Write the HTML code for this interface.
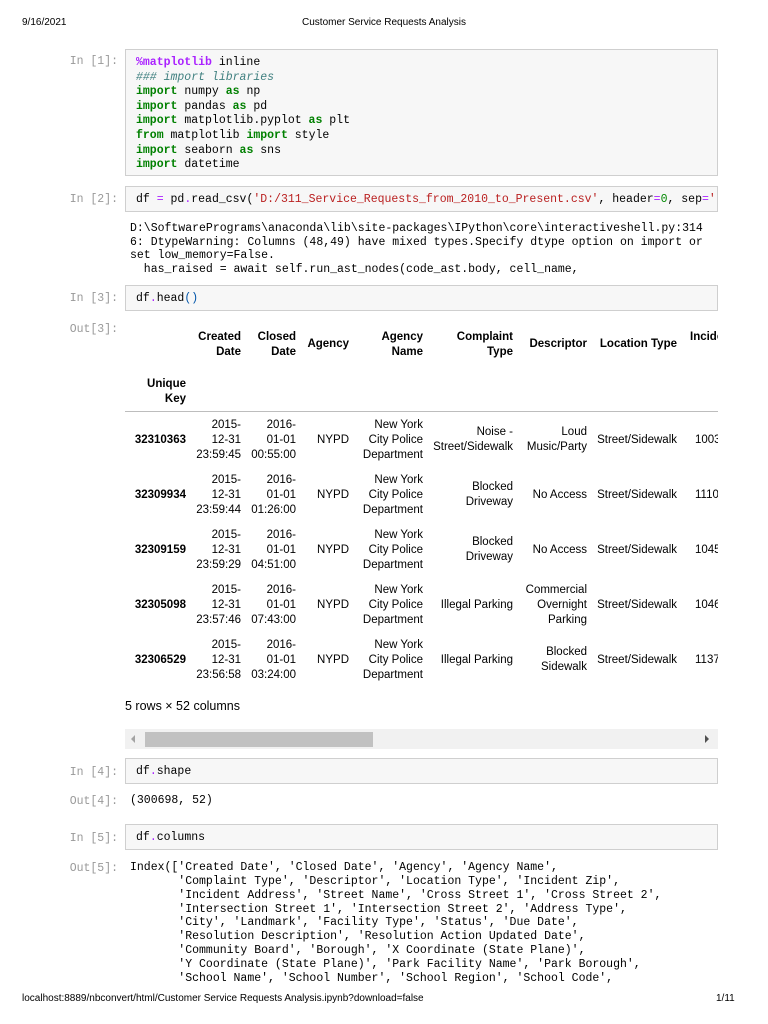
<!DOCTYPE html>
<html><head><meta charset="utf-8"><style>
*{margin:0;padding:0;box-sizing:border-box}
body{width:768px;height:1024px;background:#fff;position:relative;overflow:hidden;font-family:"Liberation Sans",sans-serif;color:#000}
.a{position:absolute}
.hdr{font-size:10px;top:17px}
.p{font-family:"Liberation Mono",monospace;font-size:11.5px;color:#999;text-align:right;width:60px;left:58px}
.box{position:absolute;left:125px;width:593px;border:1px solid #cfcfcf;background:#f7f7f7}
.m{font-family:"Liberation Mono",monospace;font-size:11.5px;white-space:pre;line-height:14.6px}
.k{color:#008000;font-weight:bold}.c{color:#408080;font-style:italic}.s{color:#ba2121}.o{color:#aa22ff}.pu{color:#aa22ff;font-weight:bold}
.t{font-size:11.5px;line-height:15px;text-align:right;position:absolute;color:#000}
.th{font-weight:bold}
</style></head><body>
<div class="a hdr" style="left:22px">9/16/2021</div>
<div class="a hdr" style="left:0;width:768px;text-align:center">Customer Service Requests Analysis</div>

<div class="a p" style="top:55px">In [1]:</div>
<div class="box" style="top:49px;height:127px;padding:6px 0 0 10px"><div class="m"><span class="pu">%matplotlib</span> inline
<span class="c">### import libraries</span>
<span class="k">import</span> numpy <span class="k">as</span> np
<span class="k">import</span> pandas <span class="k">as</span> pd
<span class="k">import</span> matplotlib.pyplot <span class="k">as</span> plt
<span class="k">from</span> matplotlib <span class="k">import</span> style
<span class="k">import</span> seaborn <span class="k">as</span> sns
<span class="k">import</span> datetime</div></div>

<div class="a p" style="top:193px">In [2]:</div>
<div class="box" style="top:186px;height:26px;padding:6px 0 0 10px;overflow:hidden"><div class="m">df <span class="o">=</span> pd<span class="o">.</span>read_csv(<span class="s">'D:/311_Service_Requests_from_2010_to_Present.csv'</span>, header<span class="o">=</span><span style="color:#080">0</span>, sep<span class="o">=</span><span class="s">'</span></div></div>

<div class="a m" style="left:130px;top:222px;line-height:13.7px">D:\SoftwarePrograms\anaconda\lib\site-packages\IPython\core\interactiveshell.py:314
6: DtypeWarning: Columns (48,49) have mixed types.Specify dtype option on import or
set low_memory=False.
  has_raised = await self.run_ast_nodes(code_ast.body, cell_name,</div>

<div class="a p" style="top:292px">In [3]:</div>
<div class="box" style="top:285px;height:26px;padding:6px 0 0 10px"><div class="m">df<span class="o">.</span>head<span style="color:#0055aa">()</span></div></div>

<div class="a p" style="top:323px">Out[3]:</div>

<div class="t th" style="left:180px;width:61px;top:330px">Created<br>Date</div>
<div class="t th" style="left:240px;width:56px;top:330px">Closed<br>Date</div>
<div class="t th" style="left:300px;width:49px;top:337px">Agency</div>
<div class="t th" style="left:350px;width:73px;top:330px">Agency<br>Name</div>
<div class="t th" style="left:430px;width:83px;top:330px">Complaint<br>Type</div>
<div class="t th" style="left:520px;width:67px;top:337px">Descriptor</div>
<div class="t th" style="left:594px;width:83px;top:337px">Location Type</div>
<div class="t th" style="left:690px;top:330px;text-align:left;width:28px;overflow:hidden;white-space:nowrap">Incident</div>
<div class="t th" style="left:125px;width:61px;top:377px">Unique<br>Key</div>
<div class="a" style="left:125px;top:411px;width:593px;height:1px;background:#bdbdbd"></div>

<div id="rows"></div>
<script>
var d=[["32310363","12-31<br>23:59:45","01-01<br>00:55:00","Noise -<br>Street/Sidewalk","Loud<br>Music/Party","1003"],
["32309934","12-31<br>23:59:44","01-01<br>01:26:00","Blocked<br>Driveway","No Access","1110"],
["32309159","12-31<br>23:59:29","01-01<br>04:51:00","Blocked<br>Driveway","No Access","1045"],
["32305098","12-31<br>23:57:46","01-01<br>07:43:00","Illegal Parking","Commercial<br>Overnight<br>Parking","1046"],
["32306529","12-31<br>23:56:58","01-01<br>03:24:00","Illegal Parking","Blocked<br>Sidewalk","1137"]];
var h="";
function lines(s){return s.split("<br>").length}
function cell(l,w,c,txt,b){var n=lines(txt);var top=c-n*7.5;return '<div class="t'+(b?' th':'')+'" style="left:'+l+'px;width:'+w+'px;top:'+top+'px">'+txt+'</div>'}
for(var i=0;i<5;i++){var c=440+i*55,r=d[i];
h+=cell(125,61,c,r[0],1)+cell(180,61,c,"2015-<br>"+r[1])+cell(240,56,c,"2016-<br>"+r[2])+cell(300,49,c,"NYPD")+cell(350,73,c,"New York<br>City Police<br>Department")+cell(420,93,c,r[3])+cell(510,77,c,r[4])+cell(594,83,c,"Street/Sidewalk")+'<div class="t" style="left:695px;width:23px;overflow:hidden;text-align:left;top:'+(c-7.5)+'px">'+r[5]+'</div>';}
document.getElementById("rows").innerHTML=h;
</script>

<div class="a" style="left:125px;top:699px;font-size:12.5px">5 rows × 52 columns</div>
<div class="a" style="left:125px;top:729px;width:593px;height:20px;background:#f1f1f1"></div>
<div class="a" style="left:145px;top:732px;width:228px;height:15px;background:#c1c1c1"></div>
<div class="a" style="left:131px;top:735px;width:0;height:0;border-top:4px solid transparent;border-bottom:4px solid transparent;border-right:4px solid #a3a3a3"></div>
<div class="a" style="left:705px;top:735px;width:0;height:0;border-top:4px solid transparent;border-bottom:4px solid transparent;border-left:4px solid #505050"></div>

<div class="a p" style="top:766px">In [4]:</div>
<div class="box" style="top:758px;height:26px;padding:6px 0 0 10px"><div class="m">df<span class="o">.</span>shape</div></div>
<div class="a p" style="top:795px">Out[4]:</div>
<div class="a m" style="left:130px;top:794px">(300698, 52)</div>

<div class="a p" style="top:832px">In [5]:</div>
<div class="box" style="top:824px;height:26px;padding:6px 0 0 10px"><div class="m">df<span class="o">.</span>columns</div></div>
<div class="a p" style="top:862px">Out[5]:</div>
<div class="a m" style="left:130px;top:861px;line-height:13.85px">Index(['Created Date', 'Closed Date', 'Agency', 'Agency Name',
       'Complaint Type', 'Descriptor', 'Location Type', 'Incident Zip',
       'Incident Address', 'Street Name', 'Cross Street 1', 'Cross Street 2',
       'Intersection Street 1', 'Intersection Street 2', 'Address Type',
       'City', 'Landmark', 'Facility Type', 'Status', 'Due Date',
       'Resolution Description', 'Resolution Action Updated Date',
       'Community Board', 'Borough', 'X Coordinate (State Plane)',
       'Y Coordinate (State Plane)', 'Park Facility Name', 'Park Borough',
       'School Name', 'School Number', 'School Region', 'School Code',</div>

<div class="a hdr" style="left:22px;top:993px">localhost:8889/nbconvert/html/Customer Service Requests Analysis.ipynb?download=false</div>
<div class="a hdr" style="left:716px;top:993px">1/11</div>
</body></html>
